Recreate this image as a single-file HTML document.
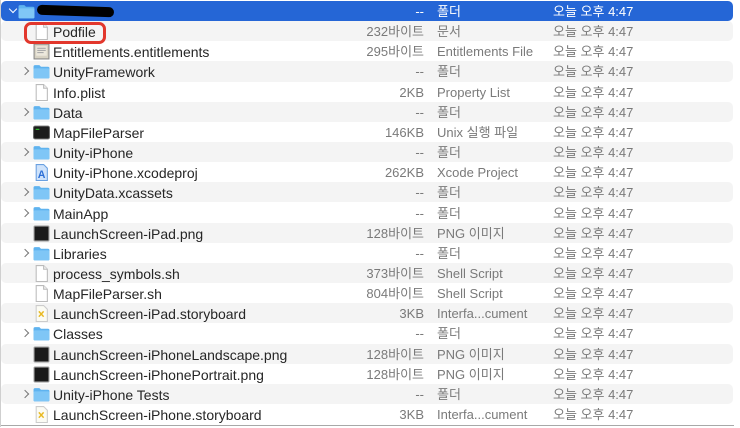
<!DOCTYPE html>
<html><head><meta charset="utf-8"><style>
*{margin:0;padding:0;box-sizing:border-box}
body{width:740px;height:428px;overflow:hidden;background:#fff;position:relative;font-family:"Liberation Sans","Noto Sans CJK KR",sans-serif;font-size:13px;color:#262626}
.r{position:absolute;left:1px;width:732px;height:20.15px;line-height:22px;border-radius:5px}
.r.g{background:#f4f4f4}
.r.sel{background:#2566d6;color:#fff}
.n{position:absolute;left:52px;white-space:nowrap;font-size:14px}
.s{position:absolute;right:309px;color:#7a7a7a;white-space:nowrap}
.k{position:absolute;left:436px;color:#7a7a7a;white-space:nowrap}
.d{position:absolute;left:552px;color:#7a7a7a;white-space:nowrap}
.sel .s,.sel .k,.sel .d{color:#fff}
.ch{position:absolute;left:21px;top:7px;width:6px;height:6px;border-right:1.5px solid #777;border-top:1.5px solid #777;transform:rotate(45deg)}
.ic{position:absolute;left:32px;top:3px}
.bl{position:absolute;left:0;bottom:2px;width:734px;height:1px;background:#a8a8a8}
.ll{position:absolute;left:0;top:0;width:1px;height:427px;background:#cfcfcf}
</style></head><body>
<svg width="0" height="0" style="position:absolute"><defs>
<symbol id="fold" viewBox="0 0 16 14"><path d="M0.5 2.5 Q0.5 1 2 1 H6 L7.5 2.5 H14 Q15.5 2.5 15.5 4 V12 Q15.5 13.5 14 13.5 H2 Q0.5 13.5 0.5 12Z" fill="#5fb3ef"/><rect x="0.5" y="4" width="15" height="9.5" rx="1.3" fill="#7fc6f6"/></symbol>
<symbol id="doc" viewBox="0 0 16 16"><path d="M3 0.5 H10 L13.5 4 V15.5 H3Z" fill="#fff" stroke="#bbb"/><path d="M10 0.5 V4 H13.5" fill="#eee" stroke="#bbb"/></symbol>
<symbol id="term" viewBox="0 0 16 16"><rect x="0.5" y="2" width="15" height="12" rx="1.5" fill="#1c1c1c" stroke="#666"/><path d="M2.5 5 H6" stroke="#3c3" stroke-width="1"/></symbol>
<symbol id="png" viewBox="0 0 16 16"><rect x="1" y="1" width="14" height="14" rx="1" fill="#1a1a1a" stroke="#999"/></symbol>
<symbol id="sb" viewBox="0 0 16 16"><path d="M3 0.5 H10 L13.5 4 V15.5 H3Z" fill="#fbfbf4" stroke="#ccc"/><path d="M5.5 6 L10 11 M10 6 L5.5 11" stroke="#e8b820" stroke-width="1.4"/></symbol>
<symbol id="ent" viewBox="0 0 16 16"><rect x="1" y="1" width="14" height="14" fill="#d8d3c4" stroke="#888"/><rect x="3" y="3" width="10" height="9" fill="#ece8dc"/><path d="M4 5H12M4 7H12M4 9H10" stroke="#aaa"/></symbol>
<symbol id="xc" viewBox="0 0 16 16"><path d="M3 0.5 H10 L13.5 4 V15.5 H3Z" fill="#cfe3fb" stroke="#6aa0e0"/><text x="4.5" y="13" font-size="10" font-family="Liberation Sans" font-weight="bold" fill="#2d6fd6">A</text></symbol>
</defs></svg>

<div class="r sel" style="top:1px"><div class="ch" style="left:9px;top:5px;transform:rotate(135deg);border-color:#fff"></div><svg class="ic" style="left:17px" width="17" height="15"><use href="#fold"/></svg><div style="position:absolute;left:36px;top:5px;width:77px;height:10px;background:#000;border-radius:5px;transform:rotate(2deg)"></div><span class="s">--</span><span class="k">폴더</span><span class="d">오늘 오후 4:47</span></div>
<div class="r g" style="top:21.15px"><svg class="ic" width="17" height="17" style="top:2px"><use href="#doc"/></svg><span class="n">Podfile</span><span class="s">232바이트</span><span class="k">문서</span><span class="d">오늘 오후 4:47</span></div>
<div class="r" style="top:41.3px"><svg class="ic" width="17" height="17" style="top:2px"><use href="#ent"/></svg><span class="n">Entitlements.entitlements</span><span class="s">295바이트</span><span class="k">Entitlements File</span><span class="d">오늘 오후 4:47</span></div>
<div class="r g" style="top:61.45px"><div class="ch"></div><svg class="ic" width="17" height="15"><use href="#fold"/></svg><span class="n">UnityFramework</span><span class="s">--</span><span class="k">폴더</span><span class="d">오늘 오후 4:47</span></div>
<div class="r" style="top:81.6px"><svg class="ic" width="17" height="17" style="top:2px"><use href="#doc"/></svg><span class="n">Info.plist</span><span class="s">2KB</span><span class="k">Property List</span><span class="d">오늘 오후 4:47</span></div>
<div class="r g" style="top:101.75px"><div class="ch"></div><svg class="ic" width="17" height="15"><use href="#fold"/></svg><span class="n">Data</span><span class="s">--</span><span class="k">폴더</span><span class="d">오늘 오후 4:47</span></div>
<div class="r" style="top:121.9px"><svg class="ic" width="17" height="17" style="top:2px"><use href="#term"/></svg><span class="n">MapFileParser</span><span class="s">146KB</span><span class="k">Unix 실행 파일</span><span class="d">오늘 오후 4:47</span></div>
<div class="r g" style="top:142.05px"><div class="ch"></div><svg class="ic" width="17" height="15"><use href="#fold"/></svg><span class="n">Unity-iPhone</span><span class="s">--</span><span class="k">폴더</span><span class="d">오늘 오후 4:47</span></div>
<div class="r" style="top:162.2px"><svg class="ic" width="17" height="17" style="top:2px"><use href="#xc"/></svg><span class="n">Unity-iPhone.xcodeproj</span><span class="s">262KB</span><span class="k">Xcode Project</span><span class="d">오늘 오후 4:47</span></div>
<div class="r g" style="top:182.35px"><div class="ch"></div><svg class="ic" width="17" height="15"><use href="#fold"/></svg><span class="n">UnityData.xcassets</span><span class="s">--</span><span class="k">폴더</span><span class="d">오늘 오후 4:47</span></div>
<div class="r" style="top:202.5px"><div class="ch"></div><svg class="ic" width="17" height="15"><use href="#fold"/></svg><span class="n">MainApp</span><span class="s">--</span><span class="k">폴더</span><span class="d">오늘 오후 4:47</span></div>
<div class="r g" style="top:222.65px"><svg class="ic" width="17" height="17" style="top:2px"><use href="#png"/></svg><span class="n">LaunchScreen-iPad.png</span><span class="s">128바이트</span><span class="k">PNG 이미지</span><span class="d">오늘 오후 4:47</span></div>
<div class="r" style="top:242.8px"><div class="ch"></div><svg class="ic" width="17" height="15"><use href="#fold"/></svg><span class="n">Libraries</span><span class="s">--</span><span class="k">폴더</span><span class="d">오늘 오후 4:47</span></div>
<div class="r g" style="top:262.95px"><svg class="ic" width="17" height="17" style="top:2px"><use href="#doc"/></svg><span class="n">process_symbols.sh</span><span class="s">373바이트</span><span class="k">Shell Script</span><span class="d">오늘 오후 4:47</span></div>
<div class="r" style="top:283.1px"><svg class="ic" width="17" height="17" style="top:2px"><use href="#doc"/></svg><span class="n">MapFileParser.sh</span><span class="s">804바이트</span><span class="k">Shell Script</span><span class="d">오늘 오후 4:47</span></div>
<div class="r g" style="top:303.25px"><svg class="ic" width="17" height="17" style="top:2px"><use href="#sb"/></svg><span class="n">LaunchScreen-iPad.storyboard</span><span class="s">3KB</span><span class="k">Interfa...cument</span><span class="d">오늘 오후 4:47</span></div>
<div class="r" style="top:323.4px"><div class="ch"></div><svg class="ic" width="17" height="15"><use href="#fold"/></svg><span class="n">Classes</span><span class="s">--</span><span class="k">폴더</span><span class="d">오늘 오후 4:47</span></div>
<div class="r g" style="top:343.55px"><svg class="ic" width="17" height="17" style="top:2px"><use href="#png"/></svg><span class="n">LaunchScreen-iPhoneLandscape.png</span><span class="s">128바이트</span><span class="k">PNG 이미지</span><span class="d">오늘 오후 4:47</span></div>
<div class="r" style="top:363.7px"><svg class="ic" width="17" height="17" style="top:2px"><use href="#png"/></svg><span class="n">LaunchScreen-iPhonePortrait.png</span><span class="s">128바이트</span><span class="k">PNG 이미지</span><span class="d">오늘 오후 4:47</span></div>
<div class="r g" style="top:383.85px"><div class="ch"></div><svg class="ic" width="17" height="15"><use href="#fold"/></svg><span class="n">Unity-iPhone Tests</span><span class="s">--</span><span class="k">폴더</span><span class="d">오늘 오후 4:47</span></div>
<div class="r" style="top:404px"><svg class="ic" width="17" height="17" style="top:2px"><use href="#sb"/></svg><span class="n">LaunchScreen-iPhone.storyboard</span><span class="s">3KB</span><span class="k">Interfa...cument</span><span class="d">오늘 오후 4:47</span></div>

<div style="position:absolute;left:24px;top:22px;width:82px;height:22px;border:3px solid #e2372c;border-radius:7px"></div>
<div class="bl"></div><div class="ll"></div>
</body></html>
